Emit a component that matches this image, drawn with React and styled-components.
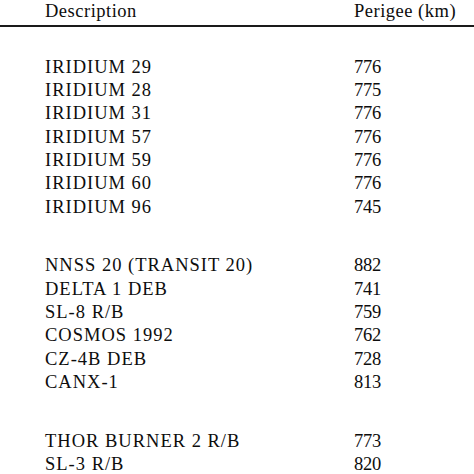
import styled, { createGlobalStyle } from "styled-components"

const GlobalStyle = createGlobalStyle`
  html, body {
    margin: 0;
    padding: 0;
    background: #ffffff;
  }
`

const Table = styled.div`
  width: 474px;
  font-family: "Liberation Serif", "Times New Roman", Times, serif;
  font-size: 18.5px;
  line-height: 23.3px;
  color: #0d0d0d;
`

const HeadRow = styled.div`
  display: grid;
  grid-template-columns: 309px 1fr;
  padding: 0 0 2px 45px;
  border-bottom: 2px solid #1a1a1a;
  letter-spacing: 0.5px;
`

const Group = styled.div`
  margin-top: ${(p) => (p.$first ? "28.5px" : "35.5px")};
`

const Row = styled.div`
  display: grid;
  grid-template-columns: 309px 1fr;
  padding-left: 45px;
`

const Name = styled.span`
  letter-spacing: 1px;
  white-space: nowrap;
`

const Value = styled.span`
  letter-spacing: -0.3px;
`

const groups = [
  [
    ["IRIDIUM 29", 776],
    ["IRIDIUM 28", 775],
    ["IRIDIUM 31", 776],
    ["IRIDIUM 57", 776],
    ["IRIDIUM 59", 776],
    ["IRIDIUM 60", 776],
    ["IRIDIUM 96", 745],
  ],
  [
    ["NNSS 20 (TRANSIT 20)", 882],
    ["DELTA 1 DEB", 741],
    ["SL-8 R/B", 759],
    ["COSMOS 1992", 762],
    ["CZ-4B DEB", 728],
    ["CANX-1", 813],
  ],
  [
    ["THOR BURNER 2 R/B", 773],
    ["SL-3 R/B", 820],
  ],
]

function App() {
  return (
    <>
      <GlobalStyle />
      <Table>
        <HeadRow>
          <span>Description</span>
          <span>Perigee (km)</span>
        </HeadRow>
        {groups.map((rows, i) => (
          <Group key={i} $first={i === 0}>
            {rows.map(([name, perigee]) => (
              <Row key={name}>
                <Name>{name}</Name>
                <Value>{perigee}</Value>
              </Row>
            ))}
          </Group>
        ))}
      </Table>
    </>
  )
}

export default App
